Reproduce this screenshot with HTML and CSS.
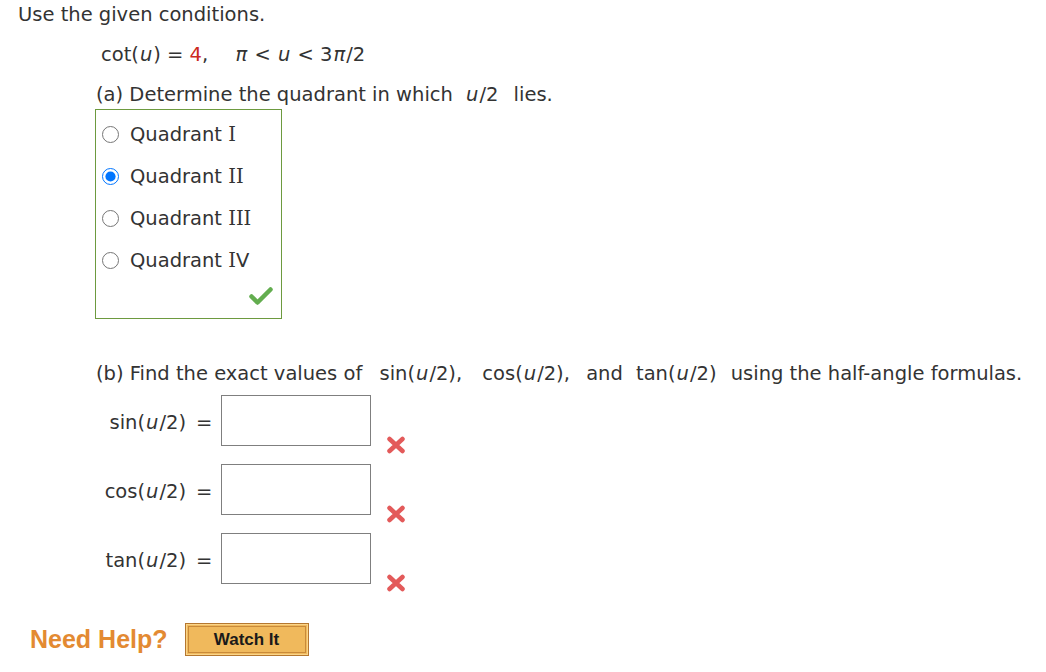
FILE: index.html
```html
<!DOCTYPE html>
<html>
<head>
<meta charset="utf-8">
<link rel="stylesheet" href="styles.css">
</head>
<body>
<div class="page">
  <p class="intro">Use the given conditions.</p>
  <p class="given">cot(<i>u</i>) = <span class="red">4</span>, <span class="gap"></span><i>π</i> &lt; <i>u</i> &lt; 3<i>π</i>/2</p>
  <p class="part">(a) Determine the quadrant in which <span class="s6"></span><i>u</i>/2<span class="s9"></span> lies.</p>
  <div class="choices">
    <label class="choice"><input type="radio" name="q"> <span>Quadrant <span class="rn">I</span></span></label>
    <label class="choice"><input type="radio" name="q" checked> <span>Quadrant <span class="rn">II</span></span></label>
    <label class="choice"><input type="radio" name="q"> <span>Quadrant <span class="rn">III</span></span></label>
    <label class="choice"><input type="radio" name="q"> <span>Quadrant <span class="rn">I</span>V</span></label>
    <svg class="check" width="24" height="20" viewBox="0 0 24 20"><path d="M2.5 10.5 L8.5 16.5 L21.5 3.5" fill="none" stroke="#63ad4f" stroke-width="4.5" stroke-linecap="round" stroke-linejoin="round"/></svg>
  </div>
  <p class="partb">(b) Find the exact values of <span class="s11"></span>sin(<i>u</i>/2), <span class="s14"></span>cos(<i>u</i>/2), <span class="s10"></span>and <span class="s7"></span>tan(<i>u</i>/2)<span class="s8"></span> using the half-angle formulas.</p>
  <div class="answers">
    <div class="row"><span class="lbl">sin(<i>u</i>/2)</span><span class="eq">=</span><span class="box"></span><svg class="x" width="20" height="18" viewBox="0 0 20 18"><path d="M3.5 3 L16.5 15 M16.5 3 L3.5 15" stroke="#e35a5a" stroke-width="4.5" stroke-linecap="round"/></svg></div>
    <div class="row"><span class="lbl">cos(<i>u</i>/2)</span><span class="eq">=</span><span class="box"></span><svg class="x" width="20" height="18" viewBox="0 0 20 18"><path d="M3.5 3 L16.5 15 M16.5 3 L3.5 15" stroke="#e35a5a" stroke-width="4.5" stroke-linecap="round"/></svg></div>
    <div class="row"><span class="lbl">tan(<i>u</i>/2)</span><span class="eq">=</span><span class="box"></span><svg class="x" width="20" height="18" viewBox="0 0 20 18"><path d="M3.5 3 L16.5 15 M16.5 3 L3.5 15" stroke="#e35a5a" stroke-width="4.5" stroke-linecap="round"/></svg></div>
  </div>
  <div class="help">
    <span class="need">Need Help?</span>
    <span class="watch"><span class="watch-in">Watch It</span></span>
  </div>
</div>
</body>
</html>
```
FILE: styles.css
```css
html, body {
  margin: 0;
  padding: 0;
  background: #fff;
}
body {
  font-family: "DejaVu Sans", Verdana, sans-serif;
  font-size: 19.5px;
  color: #333;
}
.page {
  padding: 4px 0 0 18px;
}
p {
  margin: 0;
  line-height: 22px;
  white-space: nowrap;
}
i {
  font-style: italic;
  padding: 0 1px;
}
.red {
  color: #cc2a1e;
}
.gap {
  display: inline-block;
  width: 20px;
}
.s6, .s7, .s8, .s9, .s10, .s11, .s14 {
  display: inline-block;
}
.s6 { width: 6px; }
.s7 { width: 7px; }
.s8 { width: 8px; }
.s9 { width: 9px; }
.s10 { width: 10px; }
.s11 { width: 11px; }
.s14 { width: 14px; }
.rn {
  font-family: "DejaVu Serif", serif;
  letter-spacing: 0;
}
.intro {
  margin-bottom: 18px;
}
.given {
  padding-left: 83px;
  margin-bottom: 18px;
}
.part {
  padding-left: 78px;
  margin-bottom: 3px;
}
.choices {
  margin-left: 77px;
  border: 1px solid #6d9a3f;
  display: flex;
  flex-direction: column;
  gap: 20px;
  padding-top: 13px;
  box-sizing: border-box;
  height: 210px;
  width: 187px;
  position: relative;
}
.choice {
  display: flex;
  align-items: center;
  gap: 11px;
  height: 22px;
  padding-left: 6px;
  white-space: nowrap;
}
.choice input {
  width: 17px;
  height: 17px;
  margin: 0;
}
.check {
  position: absolute;
  right: 8px;
  bottom: 12px;
}
.partb {
  margin-top: 44px;
  padding-left: 78px;
}
.answers {
  margin-top: 10px;
  display: flex;
  flex-direction: column;
  gap: 18px;
}
.row {
  display: flex;
  align-items: flex-start;
  height: 51px;
}
.lbl {
  width: 168px;
  text-align: right;
  margin-top: 16px;
  white-space: nowrap;
}
.eq {
  margin-left: 10px;
  width: 25px;
  margin-top: 16px;
}
.box {
  width: 150px;
  height: 51px;
  box-sizing: border-box;
  border: 1px solid #7f7f7f;
  background: #fff;
}
.x {
  margin-left: 15px;
  margin-top: 41px;
}
.help {
  margin-top: 39px;
  margin-left: 12px;
  display: flex;
  align-items: center;
  gap: 17px;
}
.need {
  font-family: "Liberation Sans", Arial, sans-serif;
  font-weight: bold;
  font-size: 25px;
  color: #e38a32;
}
.watch {
  display: inline-block;
  width: 124px;
  height: 33px;
  box-sizing: border-box;
  border: 1px solid #b5772f;
  background: #f0b95c;
  padding: 2px;
  box-shadow: inset 0 0 0 1px #f9d48a;
}
.watch-in {
  display: flex;
  align-items: center;
  justify-content: center;
  height: 100%;
  box-sizing: border-box;
  border: 1px solid #c98a3a;
  font-family: "Liberation Sans", Arial, sans-serif;
  font-weight: bold;
  font-size: 17px;
  color: #1a1a1a;
}
```
